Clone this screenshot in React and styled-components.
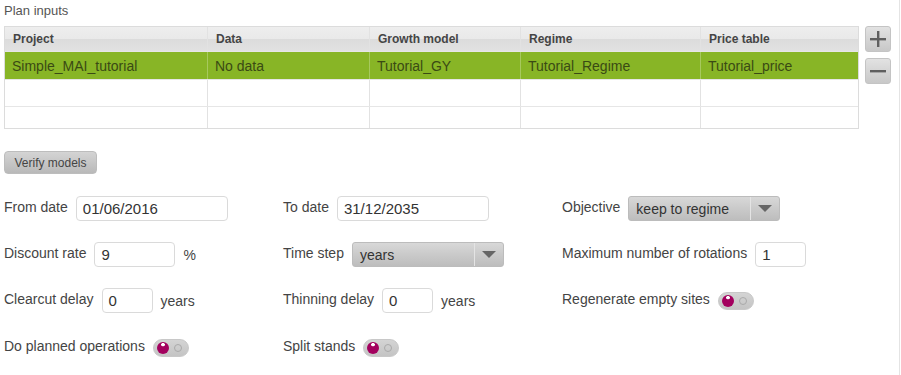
import React from "react";
import styled, { createGlobalStyle } from "styled-components";

const Global = createGlobalStyle`
  html, body { margin: 0; padding: 0; background: #fff; }
  body { font-family: "Liberation Sans", Arial, sans-serif; color: #444; }
`;

const Page = styled.div`
  position: relative;
  width: 900px;
  height: 375px;
  box-sizing: border-box;
  padding: 3px 0 0 4px;
  border-right: 1px solid #e4e4e4;
  overflow: hidden;
`;

const Title = styled.div`
  font-size: 13px;
  color: #555;
  height: 16px;
  line-height: 16px;
`;

const TableArea = styled.div`
  display: flex;
  align-items: flex-start;
  gap: 6px;
  margin-top: 7px;
`;

const Table = styled.div`
  width: 855px;
  border: 1px solid #dcdcdc;
  box-sizing: border-box;
`;

const Row = styled.div`
  display: grid;
  grid-template-columns: 203px 162px 151px 180px 1fr;
  height: ${(p) => p.$h}px;
  background: ${(p) =>
    p.$head
      ? "linear-gradient(#eeeeee, #e9e9e9 50%, #dcdcdc 51%, #e2e2e2)"
      : p.$sel
      ? "#88b526"
      : "#fff"};
  border-bottom: ${(p) => (p.$last ? "none" : "1px solid #e6e6e6")};
`;

const Cell = styled.div`
  box-sizing: border-box;
  padding-left: ${(p) => (p.$head ? 8 : 7)}px;
  display: flex;
  align-items: center;
  font-size: ${(p) => (p.$head ? 12 : 14)}px;
  font-weight: ${(p) => (p.$head ? "bold" : "normal")};
  color: ${(p) => (p.$sel ? "#3a4a14" : "#454545")};
  border-right: ${(p) =>
    p.$end ? "none" : p.$sel ? "1px solid #a7c95e" : "1px solid #e2e2e2"};
`;

const SideButtons = styled.div`
  display: flex;
  flex-direction: column;
  gap: 6px;
`;

const IconBtn = styled.div`
  width: 26px;
  height: 26px;
  box-sizing: border-box;
  border-radius: 3px;
  border: 1px solid #c4c4c4;
  background: linear-gradient(#e2e2e2, #c8c8c8);
  display: flex;
  align-items: center;
  justify-content: center;
`;

const VerifyBtn = styled.div`
  margin-top: 22px;
  width: 93px;
  height: 23px;
  box-sizing: border-box;
  border-radius: 4px;
  border: 1px solid #bdbdbd;
  background: linear-gradient(#d4d4d4, #b9b9b9);
  font-size: 12px;
  color: #444;
  display: flex;
  align-items: center;
  justify-content: center;
`;

const Form = styled.div`
  display: grid;
  grid-template-columns: 279px 279px 279px;
  grid-auto-rows: 25px;
  row-gap: 21px;
  margin-top: 22px;
`;

const Field = styled.div`
  display: flex;
  align-items: center;
  gap: 8px;
  font-size: 14px;
  color: #444;
  margin-top: ${(p) => p.$dy || 0}px;
`;

const Label = styled.span`
  white-space: nowrap;
  position: relative;
  top: -2px;
`;

const Input = styled.div`
  width: ${(p) => p.$w}px;
  height: 25px;
  box-sizing: border-box;
  border: 1px solid #dadada;
  border-radius: 4px;
  background: #fff;
  padding-left: 6px;
  display: flex;
  align-items: center;
  font-size: 15px;
  color: #333;
`;

const Unit = styled.span`
  margin-left: ${(p) => p.$ml || 0}px;
`;

const Select = styled.div`
  width: ${(p) => p.$w}px;
  height: 25px;
  box-sizing: border-box;
  border: 1px solid #bcbcbc;
  border-radius: 3px;
  background: linear-gradient(#d8d8d8, #cacaca 50%, #bdbdbd);
  display: flex;
  align-items: center;
  font-size: 14px;
  color: #333;
`;

const SelectText = styled.span`
  flex: 1;
  padding-left: 7px;
`;

const Caret = styled.span`
  width: 28px;
  height: 100%;
  border-left: 1px solid #e4e4e4;
  display: flex;
  align-items: center;
  justify-content: center;
  &::after {
    content: "";
    border-left: 7px solid transparent;
    border-right: 7px solid transparent;
    border-top: 7px solid #666;
  }
`;

const Toggle = styled.span`
  position: relative;
  width: 36px;
  height: 18px;
  border-radius: 9px;
  background: linear-gradient(#d4d4d4, #c4c4c4);
  border: 1px solid #c8c8c8;
  box-sizing: border-box;
  &::before {
    content: "";
    position: absolute;
    left: 3px;
    top: 2px;
    width: 12px;
    height: 12px;
    border-radius: 50%;
    background: radial-gradient(circle at 50% 22%, #fff 0 1.6px, #a3005e 2px);
  }
  &::after {
    content: "";
    position: absolute;
    right: 6px;
    top: 4px;
    width: 6px;
    height: 6px;
    border-radius: 50%;
    border: 1px solid #aaa;
  }
`;

const Plus = () => (
  <svg width="18" height="18" viewBox="0 0 18 18">
    <rect x="8" y="1" width="2.4" height="16" fill="#5f5f5f" />
    <rect x="1" y="8" width="16" height="2.4" fill="#5f5f5f" />
  </svg>
);
const Minus = () => (
  <svg width="18" height="18" viewBox="0 0 18 18">
    <rect x="1" y="8" width="16" height="2.4" fill="#5f5f5f" />
  </svg>
);

const heads = ["Project", "Data", "Growth model", "Regime", "Price table"];
const sel = ["Simple_MAI_tutorial", "No data", "Tutorial_GY", "Tutorial_Regime", "Tutorial_price"];

export default function App() {
  return (
    <>
      <Global />
      <Page>
        <Title>Plan inputs</Title>
        <TableArea>
          <Table>
            <Row $h={24} $head>
              {heads.map((h, i) => (
                <Cell key={h} $head $end={i === 4}>{h}</Cell>
              ))}
            </Row>
            <Row $h={27} $sel>
              {sel.map((h, i) => (
                <Cell key={h} $sel $end={i === 4}>{h}</Cell>
              ))}
            </Row>
            <Row $h={26}>
              {heads.map((h, i) => <Cell key={h} $end={i === 4} />)}
            </Row>
            <Row $h={21} $last>
              {heads.map((h, i) => <Cell key={h} $end={i === 4} />)}
            </Row>
          </Table>
          <SideButtons>
            <IconBtn><Plus /></IconBtn>
            <IconBtn><Minus /></IconBtn>
          </SideButtons>
        </TableArea>
        <VerifyBtn>Verify models</VerifyBtn>
        <Form>
          <Field><Label>From date</Label><Input $w={152}>01/06/2016</Input></Field>
          <Field><Label>To date</Label><Input $w={152}>31/12/2035</Input></Field>
          <Field><Label>Objective</Label><Select $w={152}><SelectText>keep to regime</SelectText><Caret /></Select></Field>

          <Field><Label>Discount rate</Label><Input $w={81}>9</Input><Unit>%</Unit></Field>
          <Field><Label>Time step</Label><Select $w={152}><SelectText>years</SelectText><Caret /></Select></Field>
          <Field><Label>Maximum number of rotations</Label><Input $w={51}>1</Input></Field>

          <Field><Label>Clearcut delay</Label><Input $w={51}>0</Input><Unit>years</Unit></Field>
          <Field><Label>Thinning delay</Label><Input $w={51}>0</Input><Unit>years</Unit></Field>
          <Field><Label>Regenerate empty sites</Label><Toggle /></Field>

          <Field $dy={2}><Label>Do planned operations</Label><Toggle /></Field>
          <Field $dy={2}><Label>Split stands</Label><Toggle /></Field>
        </Form>
      </Page>
    </>
  );
}
